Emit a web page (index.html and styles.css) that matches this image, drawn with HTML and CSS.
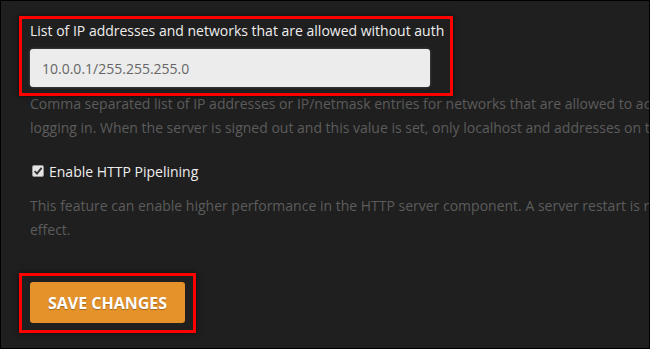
FILE: index.html
```html
<!DOCTYPE html>
<html lang="en">
<head>
<meta charset="UTF-8">
<title>Network settings</title>
<link rel="stylesheet" href="styles.css">
</head>
<body>
<div class="page">
	<div class="field highlight">
		<label class="label" for="allowedNetworks">List of IP addresses and networks that are allowed without auth</label>
		<input type="text" id="allowedNetworks" class="text-input" value="10.0.0.1/255.255.255.0">
	</div>
	<p class="help help-first">Comma separated list of IP addresses or IP/netmask entries for networks that are allowed to access the server without logging in. When the server is signed out and this value is set, only localhost and addresses on this list will be allowed.</p>

	<div class="check-row">
		<span class="checkbox">
			<svg width="10" height="10" viewBox="0 0 10 10"><path d="M1.6 5.2 L4 7.6 L8.6 1.8" fill="none" stroke="#333" stroke-width="1.9"/></svg>
		</span>
		<span class="check-label">Enable HTTP Pipelining</span>
	</div>
	<p class="help help-second">This feature can enable higher performance in the HTTP server component. A server restart is required for this to take effect.</p>

	<div class="actions">
		<div class="button-wrap highlight">
			<button type="button" class="btn-save">Save Changes</button>
		</div>
	</div>
</div>
</body>
</html>
```
FILE: styles.css
```css
* { padding: 0; margin: 0; box-sizing: border-box; }
html, body { height: 100%; overflow: hidden; background-color: #1f1f1f; }
body { font-family: "Open Sans", "Liberation Sans", sans-serif; }

.page { height: 349px; border: 1px solid #000; padding: 21px 0 0 29px; overflow: hidden; white-space: nowrap; }

/* red annotation boxes */
.highlight { position: relative; }
.highlight::after { content: ""; position: absolute; border: 3px solid #f00; box-shadow: 0 0 6px rgba(0,0,0,0.6); pointer-events: none; }
.field.highlight::after { top: -6px; left: -11px; right: -11px; bottom: -9px; }
.button-wrap.highlight::after { top: -9px; left: -11px; right: -11px; bottom: -10px; }

.field { width: 412px; display: flex; flex-direction: column; }
.label { font-size: 14px; line-height: 18px; color: #eee; }
.text-input { margin-top: 9px; width: 400px; height: 38px; border: none; border-radius: 3px; background-color: #ececec; padding: 0 12px; font-family: inherit; font-size: 14px; color: #666; box-shadow: 0 0 3px rgba(255,255,255,0.25); outline: none; }

.help { font-size: 14px; line-height: 24px; color: #5c5c5c; white-space: normal; width: 806px; }
.help-first { margin-top: 5px; }
.help-second { margin-top: 13px; }

.check-row { margin-top: 21px; display: flex; align-items: center; gap: 5px; height: 20px; }
.checkbox { width: 12px; height: 12px; margin-left: 2px; background-color: #e4e4e4; border: 1px solid #9a9a9a; border-radius: 2px; display: flex; align-items: center; justify-content: center; }
.check-label { font-size: 14px; color: #eee; }

.actions { margin-top: 40px; }
.button-wrap { display: inline-block; }
.btn-save { display: block; width: 155px; height: 41px; border: none; border-radius: 3px; background-color: #e5922b; color: #fff; font-family: inherit; font-size: 16px; font-weight: bold; text-transform: uppercase; text-shadow: 0 1px 1px rgba(0,0,0,0.3); cursor: pointer; }
```
